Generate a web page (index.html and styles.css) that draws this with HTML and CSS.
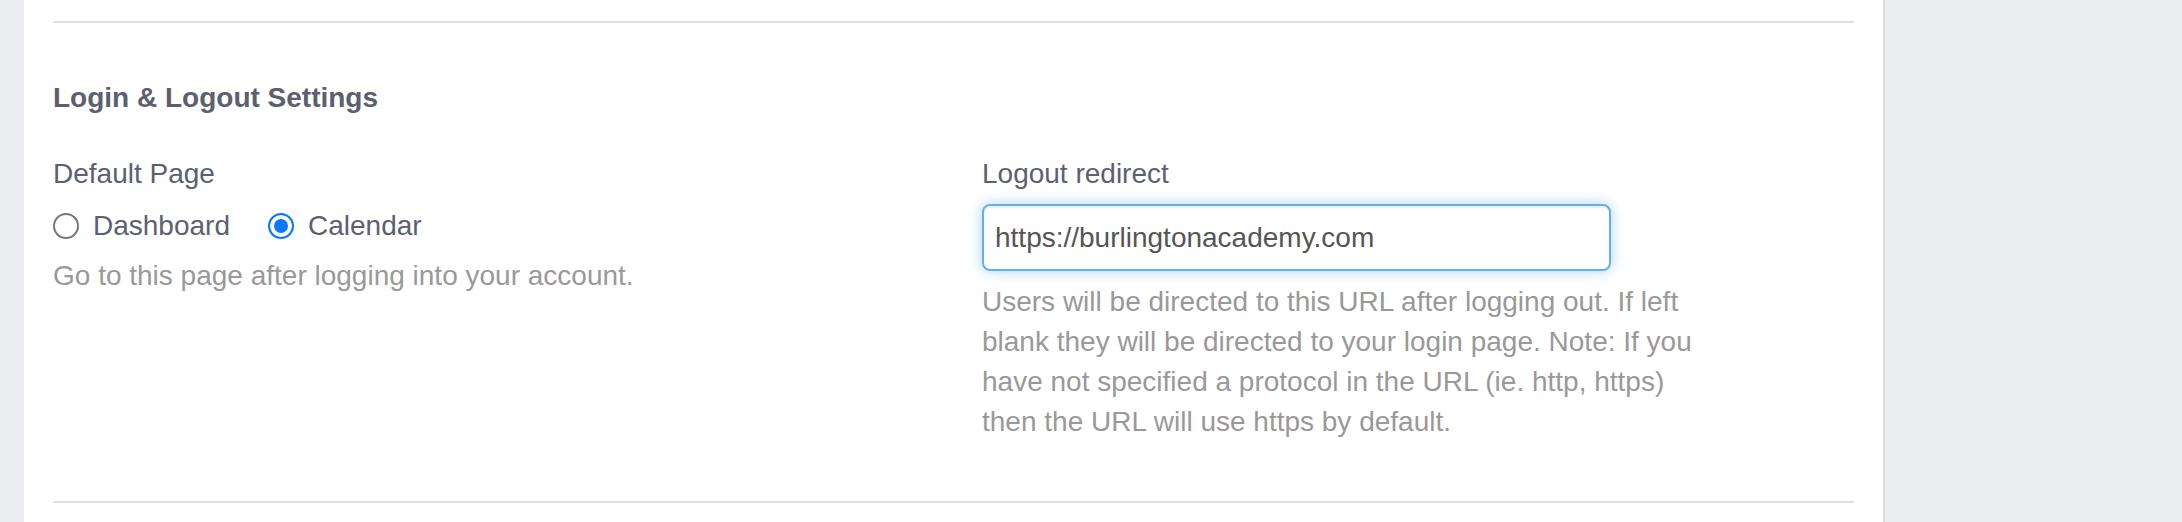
FILE: index.html
```html
<!DOCTYPE html>
<html lang="en">
<head>
<meta charset="utf-8">
<title>Login &amp; Logout Settings</title>
<link rel="stylesheet" href="styles.css">
</head>
<body>
<div class="layout">
  <div class="gutter"></div>
  <main class="card">
    <hr class="divider">
    <section class="settings">
      <h3 class="section-title">Login &amp; Logout Settings</h3>
      <div class="fields">
        <div class="field">
          <div class="field-label">Default Page</div>
          <div class="radio-group">
            <label class="radio"><input type="radio" name="default-page"><span>Dashboard</span></label>
            <label class="radio"><input type="radio" name="default-page" checked><span>Calendar</span></label>
          </div>
          <p class="help">Go to this page after logging into your account.</p>
        </div>
        <div class="field field-right">
          <label class="field-label" for="logout-redirect">Logout redirect</label>
          <input class="text-input" id="logout-redirect" type="text" value="https://burlingtonacademy.com">
          <p class="help help-wide">Users will be directed to this URL after logging out. If left blank they will be directed to your login page. Note: If you have not specified a protocol in the URL (ie. http, https) then the URL will use https by default.</p>
        </div>
      </div>
    </section>
    <hr class="divider divider-bottom">
  </main>
  <div class="aside"></div>
</div>
</body>
</html>
```
FILE: styles.css
```css
* { box-sizing: border-box; }

html, body {
  margin: 0;
  padding: 0;
}

body {
  background: #ecedf1;
  font-family: "Liberation Sans", Arial, Helvetica, sans-serif;
  font-size: 28px;
  line-height: 40px;
  color: #5c6171;
}

.layout {
  display: flex;
  height: 522px;
  overflow: hidden;
}

.gutter {
  width: 24px;
  flex: 0 0 24px;
  background: #ecedf1;
}

.card {
  flex: 0 0 1861px;
  width: 1861px;
  background: #ffffff;
  border-right: 2px solid #dddddb;
  padding: 21px 29px 0 29px;
}

.aside {
  flex: 1 1 auto;
  background: #ecedf1;
}

.divider {
  margin: 0;
  border: 0;
  height: 2px;
  background: #dfdfdf;
}

.divider-bottom {
  margin-top: 59px;
}

.section-title {
  margin: 55px 0 0 0;
  font-size: 28px;
  line-height: 40px;
  font-weight: bold;
  color: #5b6070;
}

.fields {
  margin-top: 36px;
  display: grid;
  grid-template-columns: 929px 728px;
}

.field {
  display: flex;
  flex-direction: column;
  align-items: flex-start;
}

.field-label {
  display: block;
  font-weight: normal;
  color: #5c6171;
}

.radio-group {
  margin-top: 12px;
  display: flex;
  align-items: center;
  gap: 38px;
}

.radio {
  display: flex;
  align-items: center;
  gap: 14px;
  color: #5c6171;
  cursor: pointer;
}

.radio input {
  -webkit-appearance: none;
  appearance: none;
  margin: 0;
  width: 26px;
  height: 26px;
  border-radius: 50%;
  border: 2px solid #777777;
  background: #ffffff;
}

.radio input:checked {
  border-color: #0a78ff;
  background: #0a78ff;
  box-shadow: inset 0 0 0 4px #ffffff;
}

.help {
  margin: 10px 0 0 0;
  color: #999999;
}

.help-wide {
  margin-top: 11px;
  width: 728px;
}

.text-input {
  margin-top: 10px;
  width: 629px;
  height: 67px;
  padding: 0 11px;
  border: 2px solid #66afe9;
  border-radius: 8px;
  font-family: inherit;
  font-size: 28px;
  color: #555555;
  background: #ffffff;
  outline: none;
  box-shadow: inset 0 2px 2px rgba(0, 0, 0, 0.075), 0 0 14px rgba(102, 175, 233, 0.55);
}
```
